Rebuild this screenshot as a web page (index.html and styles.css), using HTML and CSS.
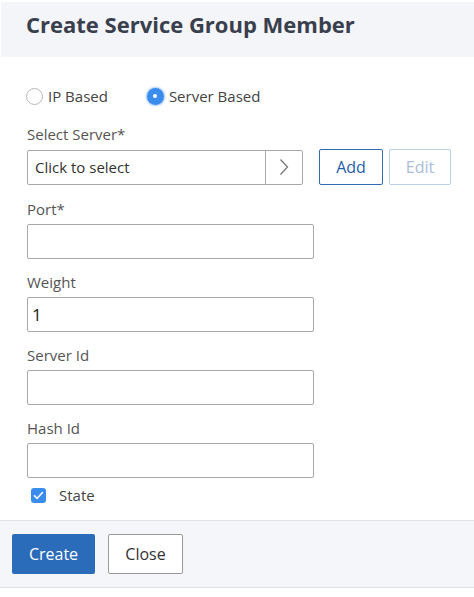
FILE: index.html
```html
<!DOCTYPE html>
<html>
<head>
<meta charset="utf-8">
<link rel="stylesheet" href="styles.css">
</head>
<body>
<div class="dialog">
  <header class="dlg-header">
    <h1 class="dlg-title">Create Service Group Member</h1>
  </header>
  <main class="dlg-body">
    <div class="radio-row">
      <label class="radio"><span class="radio-dot"></span><span class="radio-text">IP Based</span></label>
      <label class="radio checked"><span class="radio-dot"></span><span class="radio-text">Server Based</span></label>
    </div>
    <div class="field field-select">
      <div class="label">Select Server*</div>
      <div class="select-row">
        <div class="picker">
          <span class="picker-text">Click to select</span>
          <span class="picker-btn">
            <svg width="10" height="18" viewBox="0 0 10 18"><path d="M1.5 1.5 L8.5 9 L1.5 16.5" fill="none" stroke="#777" stroke-width="1.3"/></svg>
          </span>
        </div>
        <button class="btn btn-outline">Add</button>
        <button class="btn btn-disabled">Edit</button>
      </div>
    </div>
    <div class="field">
      <div class="label">Port*</div>
      <div class="input"></div>
    </div>
    <div class="field">
      <div class="label">Weight</div>
      <div class="input">1</div>
    </div>
    <div class="field">
      <div class="label">Server Id</div>
      <div class="input"></div>
    </div>
    <div class="field">
      <div class="label">Hash Id</div>
      <div class="input"></div>
    </div>
    <label class="check-row">
      <span class="checkbox">
        <svg width="11" height="9" viewBox="0 0 11 9"><path d="M1.5 4.8 L4.2 7.3 L9.5 1.5" fill="none" stroke="#fff" stroke-width="1.6" stroke-linecap="round" stroke-linejoin="round"/></svg>
      </span>
      <span class="check-text">State</span>
    </label>
  </main>
  <footer class="dlg-footer">
    <button class="btn btn-primary">Create</button>
    <button class="btn btn-default">Close</button>
  </footer>
</div>
</body>
</html>
```

FILE: styles.css
```css
* { box-sizing: border-box; }
html, body { margin: 0; padding: 0; background: #fff; }
body {
  font-family: "Open Sans", "Noto Sans", "Liberation Sans", sans-serif;
  color: #333;
}
.dialog { width: 474px; }

.dlg-header {
  height: 55px;
  margin-top: 2px;
  margin-left: 1px;
  background: #f3f5f8;
  padding: 7px 0 0 25px;
}
.dlg-title {
  margin: 0;
  font-size: 22px;
  line-height: 30px;
  font-weight: 700;
  color: #3a3f4e;
}

.dlg-body { padding: 28px 0 0 27px; }

.radio-row {
  display: flex;
  align-items: center;
  height: 22px;
  margin-bottom: 17px;
}
.radio {
  display: flex;
  align-items: center;
  margin-right: 40px;
}
.radio-dot {
  width: 17px;
  height: 17px;
  border-radius: 50%;
  border: 1px solid #b9b9b9;
  background: #fff;
  margin-right: 5px;
  margin-left: -1px;
}
.radio.checked .radio-dot {
  border: none;
  background: #3b8ded;
  box-shadow: 0 0 2px 1px rgba(80, 150, 240, 0.55);
  position: relative;
}
.radio.checked .radio-dot::after {
  content: "";
  position: absolute;
  left: 6.5px;
  top: 6.5px;
  width: 4px;
  height: 4px;
  border-radius: 50%;
  background: #fff;
}
.radio-text {
  font-size: 15px;
  line-height: 20px;
  color: #444;
}

.field { margin-bottom: 13px; }
.field-select { margin-bottom: 14px; }
.label {
  font-size: 15px;
  line-height: 20px;
  color: #555;
  margin-bottom: 5px;
}
.input {
  width: 287px;
  height: 35px;
  border: 1px solid #a8a8a8;
  border-radius: 2px;
  padding: 0 0 0 4px;
  font-size: 17px;
  line-height: 33px;
  color: #222;
}

.select-row {
  display: flex;
  align-items: center;
}
.picker {
  display: flex;
  width: 276px;
  height: 35px;
  border: 1px solid #a8a8a8;
  border-radius: 2px;
}
.picker-text {
  flex: 1;
  font-size: 15px;
  line-height: 33px;
  padding-left: 7px;
  color: #333;
}
.picker-btn {
  width: 37px;
  border-left: 1px solid #a8a8a8;
  display: flex;
  align-items: center;
  justify-content: center;
}

.btn {
  font-family: inherit;
  font-size: 16px;
  background: #fff;
  border-radius: 2px;
  padding: 0;
  cursor: pointer;
}
.btn-outline {
  margin-left: 16px;
  width: 64px;
  height: 36px;
  border: 1px solid #2f6db3;
  color: #1f5ea8;
}
.btn-disabled {
  margin-left: 6px;
  width: 62px;
  height: 36px;
  border: 1px solid #bccfe6;
  color: #a9bdd6;
}

.check-row {
  display: flex;
  align-items: center;
  height: 20px;
  margin-top: -6px;
  padding-left: 4px;
}
.checkbox {
  width: 15px;
  height: 15px;
  border-radius: 3px;
  background: #3b8ded;
  display: flex;
  align-items: center;
  justify-content: center;
  margin-right: 13px;
}
.check-text {
  font-size: 15px;
  line-height: 20px;
  color: #444;
}

.dlg-footer {
  margin-top: 15px;
  height: 68px;
  background: #f4f6f9;
  border-top: 1px solid #dfe3e8;
  border-bottom: 1px solid #dfe3e8;
  display: flex;
  align-items: center;
  padding-left: 12px;
  gap: 13px;
}
.btn-primary {
  width: 83px;
  height: 40px;
  border: none;
  background: #2a6cb9;
  color: #fff;
}
.btn-default {
  width: 75px;
  height: 40px;
  border: 1px solid #9a9a9a;
  color: #333;
}
```
